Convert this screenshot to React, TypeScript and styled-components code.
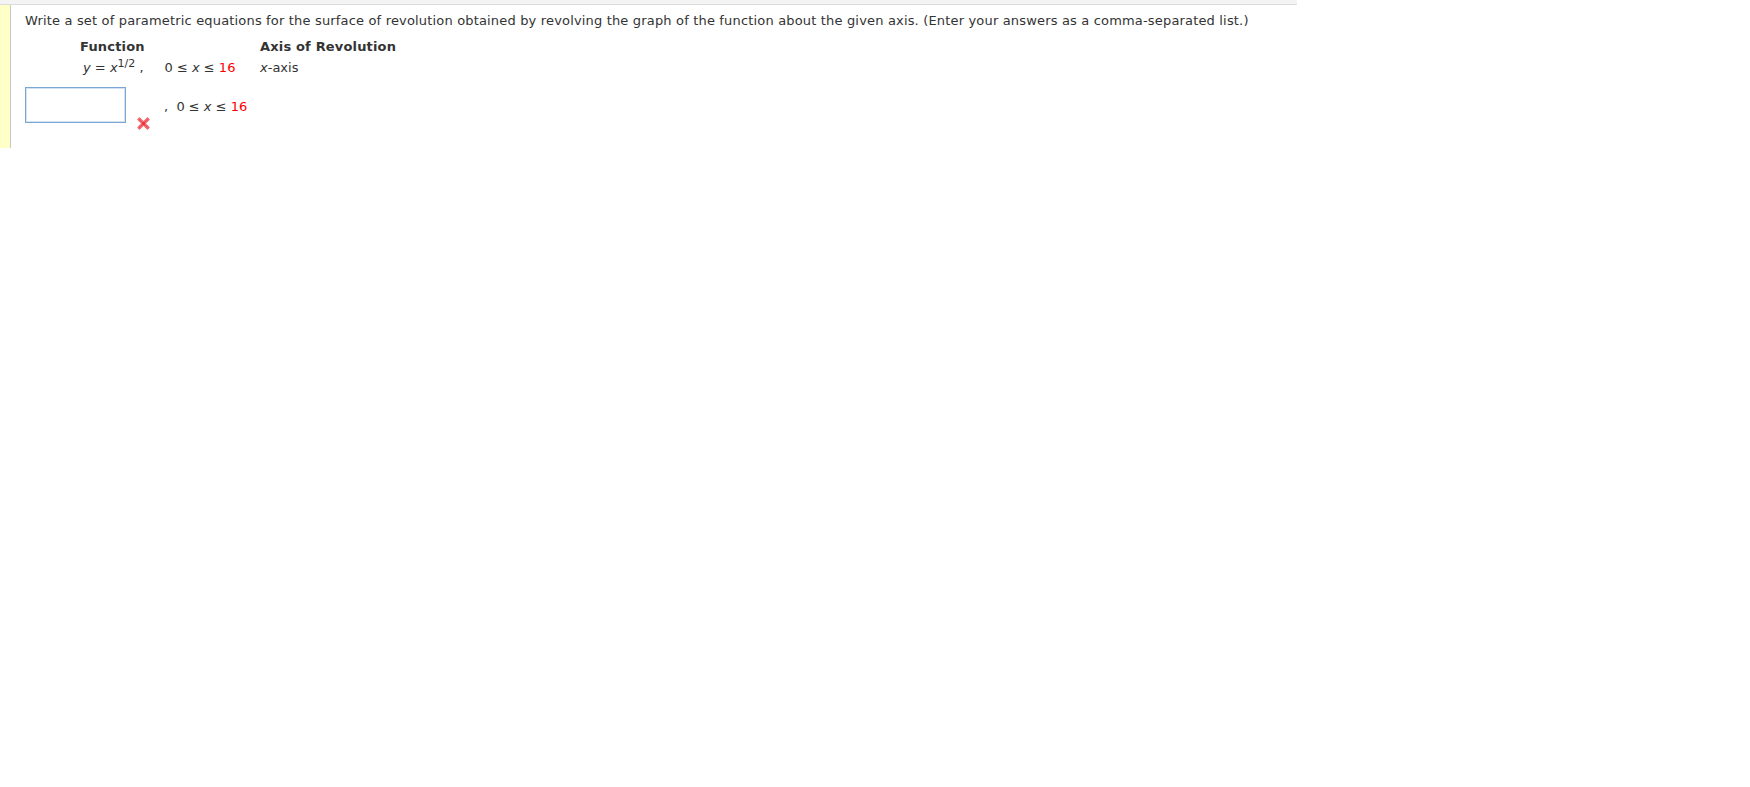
import React from "react";
import styled, { createGlobalStyle } from "styled-components";

const GlobalStyle = createGlobalStyle`
  body {
    margin: 0;
    background: #fff;
    font-family: "DejaVu Sans", Verdana, sans-serif;
    font-size: 13px;
    letter-spacing: 0.17px;
    color: #333;
  }
`;

const TopBar = styled.div`
  width: 1297px;
  height: 4px;
  background: #f4f4f4;
  border-bottom: 1px solid #dcdcdc;
`;

const Question = styled.div`
  display: flex;
  width: 1297px;
`;

const Gutter = styled.div`
  width: 10px;
  height: 143px;
  background: #ffffc8;
  border-right: 1px solid #c8c8c8;
  flex-shrink: 0;
`;

const Body = styled.div`
  padding: 8px 0 0 14px;
  display: flex;
  flex-direction: column;
`;

const Prompt = styled.div`
  line-height: 16px;
  white-space: nowrap;
`;

const Table = styled.div`
  display: grid;
  grid-template-columns: 180px auto;
  margin: 10px 0 0 55px;
  row-gap: 5px;
`;

const Head = styled.div`
  font-weight: bold;
  line-height: 16px;
`;

const Cell = styled.div<{ $indent?: number }>`
  line-height: 16px;
  white-space: nowrap;
  letter-spacing: 0;
  padding-left: ${({ $indent }) => $indent ?? 0}px;
`;

const Var = styled.i`
  font-style: italic;
`;

const Sup = styled.sup`
  font-size: 11px;
  vertical-align: 5px;
  line-height: 0;
`;

const Red = styled.span`
  color: #ff0000;
`;

const Gap = styled.span<{ $w: number }>`
  display: inline-block;
  width: ${({ $w }) => $w}px;
`;

const AnswerRow = styled.div`
  display: flex;
  align-items: flex-start;
  margin-top: 11px;
`;

const Box = styled.input`
  box-sizing: border-box;
  width: 101px;
  height: 36px;
  border: 1px solid #7ea6d3;
  box-shadow: inset 0 0 0 1px #d2e2f3;
  background: #fff;
  outline: none;
  margin: 0;
  padding: 0 4px;
`;

const Mark = styled.svg`
  margin: 29px 0 0 10px;
  flex-shrink: 0;
`;

const Domain = styled.div`
  margin: 12px 0 0 13px;
  line-height: 16px;
  white-space: nowrap;
  letter-spacing: 0;
`;

function CrossIcon() {
  return (
    <Mark width="15" height="15" viewBox="0 0 15 15">
      <path
        d="M2 3.5 L3.5 2 L7.5 6 L11.5 2 L13 3.5 L9 7.5 L13 11.5 L11.5 13 L7.5 9 L3.5 13 L2 11.5 L6 7.5 Z"
        fill="#f0494f"
        stroke="#f26a70"
        strokeWidth="1.4"
        strokeLinejoin="round"
      />
      <circle cx="7.5" cy="7.5" r="1.6" fill="#e8323a" />
    </Mark>
  );
}

export default function App() {
  return (
    <>
      <GlobalStyle />
      <TopBar />
      <Question>
        <Gutter />
        <Body>
          <Prompt>
            Write a set of parametric equations for the surface of revolution obtained by revolving the graph of the
            function about the given axis. (Enter your answers as a comma-separated list.)
          </Prompt>
          <Table>
            <Head>Function</Head>
            <Head>Axis of Revolution</Head>
            <Cell $indent={3}>
              <Var>y</Var> = <Var>x</Var>
              <Sup>1/2</Sup> ,<Gap $w={21} />0 ≤ <Var>x</Var> ≤ <Red>16</Red>
            </Cell>
            <Cell>
              <Var>x</Var>-axis
            </Cell>
          </Table>
          <AnswerRow>
            <Box type="text" />
            <CrossIcon />
            <Domain>
              ,&nbsp;&nbsp;0 ≤ <Var>x</Var> ≤ <Red>16</Red>
            </Domain>
          </AnswerRow>
        </Body>
      </Question>
    </>
  );
}
